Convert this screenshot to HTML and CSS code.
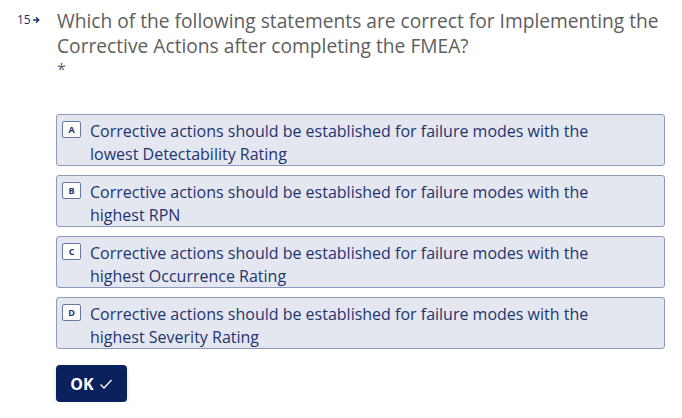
FILE: index.html
```html
<!DOCTYPE html>
<html lang="en">
<head>
<meta charset="utf-8">
<link rel="stylesheet" href="styles.css">
</head>
<body>
<div class="page">
  <div class="question">
    <div class="qnum">
      <span>15</span>
      <svg class="qarrow" width="7" height="8" viewBox="0 0 7 8"><path d="M0 4h5M3 1.2L5.8 4 3 6.8" fill="none" stroke="#1f3470" stroke-width="1.4"/></svg>
    </div>
    <div class="qtext">
      <div>Which of the following statements are correct for Implementing the Corrective Actions after completing the FMEA?</div>
      <div class="req">*</div>
    </div>
  </div>
  <div class="options">
    <div class="option"><span class="key">A</span><span class="otext">Corrective actions should be established for failure modes with the lowest Detectability Rating</span></div>
    <div class="option"><span class="key">B</span><span class="otext">Corrective actions should be established for failure modes with the highest RPN</span></div>
    <div class="option"><span class="key">C</span><span class="otext">Corrective actions should be established for failure modes with the highest Occurrence Rating</span></div>
    <div class="option"><span class="key">D</span><span class="otext">Corrective actions should be established for failure modes with the highest Severity Rating</span></div>
  </div>
  <button class="ok">OK <svg width="14" height="12" viewBox="0 0 14 12"><path d="M1.5 6.5L5 10 12.5 2" fill="none" stroke="#ffffff" stroke-width="1.3"/></svg></button>
</div>
</body>
</html>
```
FILE: styles.css
```css
html, body {
  margin: 0;
  padding: 0;
  background: #ffffff;
}
body {
  font-family: "Open Sans", "Noto Sans", sans-serif;
}
.page {
  padding: 8px 0 0 17px;
}
.question {
  display: flex;
  align-items: flex-start;
}
.qnum {
  width: 40px;
  display: flex;
  align-items: center;
  gap: 2px;
  font-size: 12px;
  color: #1f3470;
  height: 25px;
  margin-top: -1px;
}
.qtext {
  font-size: 19.2px;
  line-height: 25px;
  color: #5e5e5e;
  width: 615px;
}
.req {
  font-size: 16px;
  line-height: 22px;
}
.options {
  margin: 34px 0 0 39px;
  width: 609px;
  display: flex;
  flex-direction: column;
  gap: 9px;
}
.option {
  box-sizing: border-box;
  height: 52px;
  display: flex;
  align-items: flex-start;
  background: #e4e7ef;
  border: 1px solid #8e9abb;
  border-radius: 3px;
  padding: 5px 0 0 5px;
  color: #1f3470;
}
.key {
  box-sizing: border-box;
  flex: none;
  width: 19px;
  height: 17px;
  margin-top: 1px;
  background: #ffffff;
  border: 1px solid #67779f;
  border-radius: 2px;
  font-size: 9px;
  font-weight: 700;
  display: flex;
  align-items: center;
  justify-content: center;
  color: #1f3470;
}
.otext {
  margin-left: 9px;
  font-size: 16px;
  line-height: 23px;
  width: 540px;
}
.ok {
  margin: 16px 0 0 39px;
  width: 71px;
  height: 37px;
  border: none;
  border-radius: 4px;
  background: #0a215e;
  color: #ffffff;
  font-family: "Open Sans", sans-serif;
  font-weight: 700;
  font-size: 16px;
  display: flex;
  align-items: center;
  justify-content: center;
  gap: 5px;
  box-shadow: 0 2px 4px rgba(0,0,0,0.15);
  padding: 0;
}
```
